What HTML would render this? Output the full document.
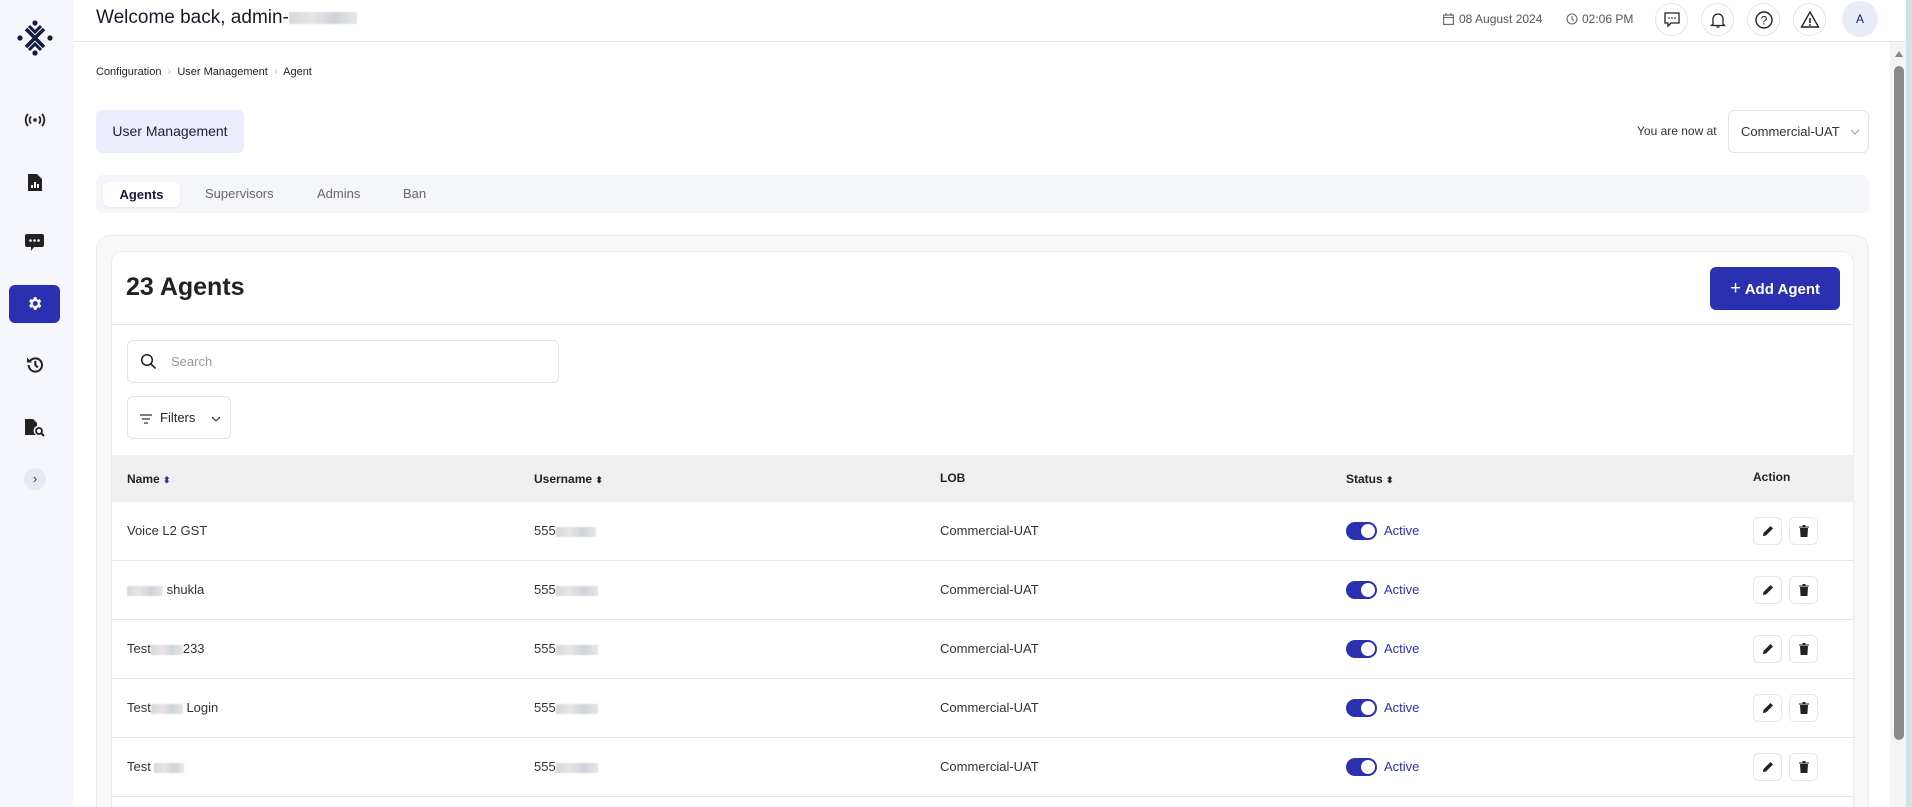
<!DOCTYPE html>
<html><head><meta charset="utf-8"><style>
*{box-sizing:border-box;margin:0;padding:0}
html{width:1912px;height:807px;overflow:hidden}
body{width:1912px;height:807px;overflow:hidden;background:#fff;font-family:"Liberation Sans",sans-serif;color:#222;position:relative}
.abs{position:absolute}
.side{left:0;top:0;width:74px;height:807px;background:#f5f7fc}
.hdr{left:74px;top:0;width:1832px;height:42px;border-bottom:1px solid #e3e3e3;background:#fff}
.blur{display:inline-block;background:linear-gradient(90deg,#d8d8d8,#e8e4e8,#cfd4da,#e6e6e6);filter:blur(.6px);height:10px;vertical-align:middle}
.row{left:111px;width:1743px;height:59px;border-bottom:1px solid #e6e6e6;font-size:13px;color:#333}
.row span{position:absolute;top:21px}
.tog{position:absolute;left:1235px;top:20px;width:31px;height:18px;border-radius:9px;background:#2a30b0}
.tog:after{content:"";position:absolute;right:2px;top:2px;width:14px;height:14px;border-radius:50%;background:#fff}
.act{position:absolute;left:1273px;top:21px;color:#2a30b0;font-size:13px;font-weight:normal}
.ab{position:absolute;top:15px;width:29px;height:28px;border:1px solid #e6e6e6;border-radius:6px;display:flex;align-items:center;justify-content:center}
.circ{position:absolute;top:3px;width:33px;height:33px;border:1px solid #e3e3e3;border-radius:50%;display:flex;align-items:center;justify-content:center}
</style></head><body>
<div class="abs side">
 <svg class="abs" style="left:16px;top:19px" width="38" height="38" viewBox="0 0 38 38" fill="#141a3c">
  <circle cx="19" cy="4" r="2.6"/><circle cx="19" cy="34" r="2.6"/><circle cx="4" cy="19" r="2.6"/><circle cx="34" cy="19" r="2.6"/>
  <path d="M10 10L28 28M28 10L10 28" stroke="#141a3c" stroke-width="3.6"/>
  <path d="M13 7l6 6 6-6" fill="none" stroke="#141a3c" stroke-width="3"/>
  <path d="M13 31l6-6 6 6" fill="none" stroke="#141a3c" stroke-width="3"/>
 </svg>
 <svg class="abs" style="left:24px;top:113px" width="22" height="14" viewBox="0 0 22 14"><path d="M4 1a9 9 0 000 12M18 1a9 9 0 010 12M7 3.5a5 5 0 000 7M15 3.5a5 5 0 010 7" fill="none" stroke="#222" stroke-width="1.8"/><circle cx="11" cy="7" r="1.8" fill="#222"/></svg>
 <svg class="abs" style="left:28px;top:174px" width="14" height="17" viewBox="0 0 14 17"><path d="M0 0h9l5 5v12H0z" fill="#222"/><path d="M3 14v-3h2v3zM6 14V8h2v6zM9 14v-4h2v4z" fill="#fff"/></svg>
 <svg class="abs" style="left:25px;top:234px" width="19" height="18" viewBox="0 0 19 18"><path d="M2 0h15a2 2 0 012 2v9a2 2 0 01-2 2H9l-3 4v-4H2a2 2 0 01-2-2V2a2 2 0 012-2z" fill="#222"/><circle cx="5.5" cy="6.5" r="1.3" fill="#fff"/><circle cx="9.5" cy="6.5" r="1.3" fill="#fff"/><circle cx="13.5" cy="6.5" r="1.3" fill="#fff"/></svg>
 <div class="abs" style="left:9px;top:285px;width:51px;height:38px;background:#2a30b0;border-radius:6px"></div>
 <svg class="abs" style="left:26px;top:295px" width="17" height="17" viewBox="0 0 24 24"><path fill="#fff" d="M19.4 13a7.5 7.5 0 000-2l2.1-1.6-2-3.5-2.5 1a7 7 0 00-1.7-1L15 3h-4l-.4 2.7a7 7 0 00-1.7 1l-2.5-1-2 3.5L6.5 11a7.5 7.5 0 000 2l-2.1 1.6 2 3.5 2.5-1a7 7 0 001.7 1L11 21h4l.4-2.7a7 7 0 001.7-1l2.5 1 2-3.5zM13 15.5a3.5 3.5 0 110-7 3.5 3.5 0 010 7z"/></svg>
 <svg class="abs" style="left:24px;top:355px" width="21" height="20" viewBox="0 0 24 24"><path fill="none" stroke="#222" stroke-width="2.4" d="M5 12a8 8 0 108-8 8 8 0 00-6.5 3.3"/><path d="M3 3v6h6z" fill="#222"/><path d="M13 7v5l3 3" fill="none" stroke="#222" stroke-width="2.4"/></svg>
 <svg class="abs" style="left:25px;top:419px" width="20" height="18" viewBox="0 0 20 18"><path d="M0 0h8l4 4v3a5 5 0 00-1 9H0z" fill="#222"/><circle cx="14" cy="12" r="3" fill="none" stroke="#222" stroke-width="1.8"/><path d="M16 14l3 3" stroke="#222" stroke-width="2"/></svg>
 <div class="abs" style="left:24px;top:468px;width:22px;height:22px;border-radius:50%;background:#e8e8f4;text-align:center;line-height:21px;font-size:13px;color:#333">›</div>
</div>
<div class="abs hdr">
 <div class="abs" style="left:22px;top:7px;font-size:19px;color:#1a1a2a">Welcome back, admin-<span class="blur" style="width:68px;height:12px"></span></div>
 <svg class="abs" style="left:1369px;top:13px" width="11" height="12" viewBox="0 0 11 12"><rect x=".6" y="2" width="9.8" height="9.4" fill="none" stroke="#666" stroke-width="1.1"/><path d="M.6 4.5h9.8M3 0v3M8 0v3" stroke="#666" stroke-width="1.1"/></svg>
 <div class="abs" style="left:1385px;top:12px;font-size:12px;color:#555">08 August 2024</div>
 <svg class="abs" style="left:1492px;top:13px" width="12" height="12" viewBox="0 0 12 12"><circle cx="6" cy="6" r="5" fill="none" stroke="#666" stroke-width="1.1"/><path d="M6 3v3l2 1.5" fill="none" stroke="#666" stroke-width="1.1"/></svg>
 <div class="abs" style="left:1508px;top:12px;font-size:12px;color:#555">02:06 PM</div>
 <div class="circ" style="left:1581px"><svg width="18" height="18" viewBox="0 0 18 18"><path d="M2 2h14v10H8l-3 3v-3H2z" fill="none" stroke="#222" stroke-width="1.3"/><circle cx="6" cy="7" r=".8"/><circle cx="9" cy="7" r=".8"/><circle cx="12" cy="7" r=".8"/></svg></div>
 <div class="circ" style="left:1627px"><svg width="18" height="18" viewBox="0 0 18 18"><path d="M4 13V8a5 5 0 0110 0v5l1.5 1.5h-13z M7.5 16h3" fill="none" stroke="#222" stroke-width="1.3"/></svg></div>
 <div class="circ" style="left:1673px"><svg width="20" height="20" viewBox="0 0 20 20"><circle cx="10" cy="10" r="8" fill="none" stroke="#222" stroke-width="1.4"/><text x="10" y="14.5" font-size="12" text-anchor="middle" font-family="Liberation Sans" fill="#222">?</text></svg></div>
 <div class="circ" style="left:1719px"><svg width="20" height="20" viewBox="0 0 20 20"><path d="M10 2l8.5 15h-17z" fill="none" stroke="#222" stroke-width="1.4"/><path d="M10 8v5" stroke="#222" stroke-width="1.6"/><circle cx="10" cy="15" r=".9"/></svg></div>
 <div class="abs" style="left:1768px;top:1px;width:36px;height:36px;border-radius:50%;background:#e8ebf8;text-align:center;line-height:36px;font-size:12px;color:#1a1a6a">A</div>
</div>
<div class="abs" style="left:96px;top:66px;font-size:11px;color:#222">Configuration <span style="color:#bbb">&nbsp;›&nbsp;</span> User Management <span style="color:#bbb">&nbsp;›&nbsp;</span> Agent</div>
<div class="abs" style="left:96px;top:110px;width:148px;height:43px;background:#ebeefa;border-radius:6px;font-size:14px;line-height:43px;text-align:center;color:#1a1a3a">User Management</div>
<div class="abs" style="left:1637px;top:124px;font-size:12px;color:#333">You are now at</div>
<div class="abs" style="left:1728px;top:110px;width:141px;height:43px;border:1px solid #e3e3e3;border-radius:6px;font-size:13px;line-height:41px;padding-left:12px;color:#333">Commercial-UAT
 <svg class="abs" style="left:121px;top:18px" width="10" height="6" viewBox="0 0 10 6"><path d="M1 1l4 4 4-4" fill="none" stroke="#999" stroke-width="1"/></svg></div>
<div class="abs" style="left:96px;top:175px;width:1773px;height:38px;background:#f5f6fa;border-radius:7px">
 <div class="abs" style="left:7px;top:7px;width:77px;height:25px;background:#fff;border-radius:6px;box-shadow:0 1px 2px rgba(0,0,0,.08);font-size:13px;font-weight:bold;line-height:25px;text-align:center;color:#1a1a3a">Agents</div>
 <div class="abs" style="left:109px;top:11px;font-size:13px;color:#666">Supervisors</div>
 <div class="abs" style="left:221px;top:11px;font-size:13px;color:#666">Admins</div>
 <div class="abs" style="left:307px;top:11px;font-size:13px;color:#666">Ban</div>
</div>
<div class="abs" style="left:96px;top:235px;width:1773px;height:572px;background:#f8f8f8;border:1px solid #ececec;border-bottom:none;border-radius:14px 14px 0 0"></div>
<div class="abs" style="left:111px;top:251px;width:1743px;height:556px;background:#fff;border:1px solid #ececec;border-bottom:none;border-radius:12px 12px 0 0"></div>
<div class="abs" style="left:126px;top:273px;font-size:25px;font-weight:bold;color:#222">23 Agents</div>
<div class="abs" style="left:1710px;top:267px;width:130px;height:43px;background:#2a30b0;border-radius:6px;color:#fff;font-size:15px;font-weight:bold;line-height:43px;text-align:center"><span style="font-weight:normal;font-size:19px">+</span> Add Agent</div>
<div class="abs" style="left:112px;top:324px;width:1741px;height:1px;background:#e6e6e6"></div>
<div class="abs" style="left:127px;top:340px;width:432px;height:43px;border:1px solid #e3e3e3;border-radius:6px">
 <svg class="abs" style="left:12px;top:12px" width="17" height="17" viewBox="0 0 17 17"><circle cx="7" cy="7" r="5.3" fill="none" stroke="#222" stroke-width="1.5"/><path d="M11 11l4.5 4.5" stroke="#222" stroke-width="1.6"/></svg>
 <div class="abs" style="left:43px;top:13px;font-size:13px;color:#999">Search</div>
</div>
<div class="abs" style="left:127px;top:396px;width:104px;height:43px;border:1px solid #e3e3e3;border-radius:6px">
 <svg class="abs" style="left:11px;top:17px" width="14" height="10" viewBox="0 0 14 10"><path d="M1 1h12M3 5h8M5 9h4" stroke="#333" stroke-width="1.3"/></svg>
 <div class="abs" style="left:32px;top:13px;font-size:13px;color:#222">Filters</div>
 <svg class="abs" style="left:83px;top:19px" width="10" height="6" viewBox="0 0 10 6"><path d="M1 1l4 4 4-4" fill="none" stroke="#333" stroke-width="1.2"/></svg>
</div>
<div class="abs" style="left:112px;top:455px;width:1741px;height:47px;background:#f0f0f0;font-size:12px;font-weight:bold;color:#222">
 <span class="abs" style="left:15px;top:17px">Name <span style="color:#2a30b0;font-size:9px">⬍</span></span>
 <span class="abs" style="left:422px;top:17px">Username <span style="font-size:9px">⬍</span></span>
 <span class="abs" style="left:828px;top:16px">LOB</span>
 <span class="abs" style="left:1234px;top:17px">Status <span style="font-size:9px">⬍</span></span>
 <span class="abs" style="left:1641px;top:15px">Action</span>
</div>
<div class="abs row" style="top:502px"><span style="left:16px">Voice L2 GST</span><span style="left:423px">555<i class="blur" style="width:40px"></i></span><span style="left:829px">Commercial-UAT</span><i class="tog"></i><b class="act">Active</b><div class="ab" style="left:1642px"><svg width="12" height="12" viewBox="0 0 12 12"><path d="M1 11l.5-3L8.5 1l2.5 2.5-7 7z" fill="#222"/></svg></div><div class="ab" style="left:1678px"><svg width="10" height="12" viewBox="0 0 10 12"><path d="M0 1.5h10v1H0zM3.5 0h3v1.5h-3zM1 3h8l-.6 9H1.6z" fill="#222"/></svg></div></div>
<div class="abs row" style="top:561px"><span style="left:16px"><i class="blur" style="width:36px"></i> shukla</span><span style="left:423px">555<i class="blur" style="width:42px"></i></span><span style="left:829px">Commercial-UAT</span><i class="tog"></i><b class="act">Active</b><div class="ab" style="left:1642px"><svg width="12" height="12" viewBox="0 0 12 12"><path d="M1 11l.5-3L8.5 1l2.5 2.5-7 7z" fill="#222"/></svg></div><div class="ab" style="left:1678px"><svg width="10" height="12" viewBox="0 0 10 12"><path d="M0 1.5h10v1H0zM3.5 0h3v1.5h-3zM1 3h8l-.6 9H1.6z" fill="#222"/></svg></div></div>
<div class="abs row" style="top:620px"><span style="left:16px">Test<i class="blur" style="width:32px"></i>233</span><span style="left:423px">555<i class="blur" style="width:42px"></i></span><span style="left:829px">Commercial-UAT</span><i class="tog"></i><b class="act">Active</b><div class="ab" style="left:1642px"><svg width="12" height="12" viewBox="0 0 12 12"><path d="M1 11l.5-3L8.5 1l2.5 2.5-7 7z" fill="#222"/></svg></div><div class="ab" style="left:1678px"><svg width="10" height="12" viewBox="0 0 10 12"><path d="M0 1.5h10v1H0zM3.5 0h3v1.5h-3zM1 3h8l-.6 9H1.6z" fill="#222"/></svg></div></div>
<div class="abs row" style="top:679px"><span style="left:16px">Test<i class="blur" style="width:32px"></i> Login</span><span style="left:423px">555<i class="blur" style="width:42px"></i></span><span style="left:829px">Commercial-UAT</span><i class="tog"></i><b class="act">Active</b><div class="ab" style="left:1642px"><svg width="12" height="12" viewBox="0 0 12 12"><path d="M1 11l.5-3L8.5 1l2.5 2.5-7 7z" fill="#222"/></svg></div><div class="ab" style="left:1678px"><svg width="10" height="12" viewBox="0 0 10 12"><path d="M0 1.5h10v1H0zM3.5 0h3v1.5h-3zM1 3h8l-.6 9H1.6z" fill="#222"/></svg></div></div>
<div class="abs row" style="top:738px"><span style="left:16px">Test <i class="blur" style="width:30px"></i></span><span style="left:423px">555<i class="blur" style="width:42px"></i></span><span style="left:829px">Commercial-UAT</span><i class="tog"></i><b class="act">Active</b><div class="ab" style="left:1642px"><svg width="12" height="12" viewBox="0 0 12 12"><path d="M1 11l.5-3L8.5 1l2.5 2.5-7 7z" fill="#222"/></svg></div><div class="ab" style="left:1678px"><svg width="10" height="12" viewBox="0 0 10 12"><path d="M0 1.5h10v1H0zM3.5 0h3v1.5h-3zM1 3h8l-.6 9H1.6z" fill="#222"/></svg></div></div>
<div class="abs" style="left:1890px;top:42px;width:16px;height:765px;background:#f4f4f4"></div>
<div class="abs" style="left:1895px;top:51px;width:0;height:0;border-left:4px solid transparent;border-right:4px solid transparent;border-bottom:6px solid #888"></div>
<div class="abs" style="left:1894px;top:66px;width:10px;height:674px;background:#8a8a8a;border-radius:5px"></div>
<div class="abs" style="left:1906px;top:0;width:6px;height:807px;background:#cfe3ea"></div>
</body></html>
